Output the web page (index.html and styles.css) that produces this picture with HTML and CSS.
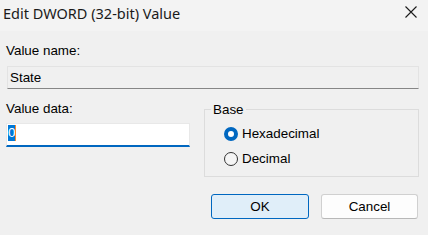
FILE: index.html
```html
<!DOCTYPE html>
<html lang="en">
<head>
    <meta charset="UTF-8">
    <title>Edit DWORD (32-bit) Value</title>
    <link rel="stylesheet" href="styles.css">
</head>
<body>

    <div class="dialog">
        <div class="titlebar">
            <span class="title">Edit DWORD (32-bit) Value</span>
            <svg class="close-icon" width="12" height="12" viewBox="0 0 12 12">
                <path d="M0.5 0.5 L11.5 11.5 M11.5 0.5 L0.5 11.5" stroke="#1a1a1a" stroke-width="1.1" fill="none"/>
            </svg>
        </div>

        <div class="content">
            <div class="field-label">Value name:</div>
            <div class="name-box">State</div>

            <div class="data-row">
                <div class="data-col">
                    <div class="field-label">Value data:</div>
                    <div class="data-box"><span class="selected">0</span><span class="caret"></span></div>
                </div>

                <fieldset class="base">
                    <legend>Base</legend>
                    <div class="radio-row">
                        <span class="radio checked"></span>
                        <span>Hexadecimal</span>
                    </div>
                    <div class="radio-row">
                        <span class="radio"></span>
                        <span>Decimal</span>
                    </div>
                </fieldset>
            </div>

            <div class="buttons">
                <button class="ok-button">OK</button>
                <button class="cancel-button">Cancel</button>
            </div>
        </div>
    </div>

</body>
</html>
```

FILE: styles.css
```css
body {
    margin: 0;
    padding: 0;
    background-color: #f0f0f0;
    font-family: "Liberation Sans", Arial, sans-serif;
    font-size: 13.4px;
    line-height: 15px;
    color: #000;
}

.dialog {
    width: 428px;
    height: 235px;
    overflow: hidden;
}

.titlebar {
    height: 31px;
    background-color: #f3f3f3;
    display: flex;
    align-items: flex-start;
    justify-content: space-between;
}

.title {
    font-family: "Noto Sans", sans-serif;
    font-size: 14.5px;
    line-height: 20px;
    padding: 3px 0 0 3px;
    color: #1a1a1a;
}

.close-icon {
    margin: 6px 11px 0 0;
}

.content {
    padding: 12px 9px 0 6px;
}

.name-box {
    margin: 8px 0 0 1px;
    height: 15px;
    padding: 3px 2px;
    border: 1px solid #e3e3e3;
    border-bottom-color: #868686;
    background-color: #f0f0f0;
}

.data-row {
    display: flex;
    justify-content: space-between;
    margin-top: 12px;
}

.data-col {
    width: 184px;
}

.data-col .field-label {
    margin-bottom: 7px;
}

.data-box {
    height: 21px;
    border: 1px solid #e8e8e8;
    border-bottom: 2px solid #0067c0;
    background-color: #fff;
    display: flex;
    align-items: flex-start;
    padding-left: 1px;
}

.selected {
    margin-top: 1px;
    width: 7px;
    height: 16px;
    line-height: 16px;
    background-color: #0078d7;
    color: #fff;
    text-align: center;
}

.caret {
    margin-top: 1px;
    width: 1px;
    height: 16px;
    background-color: #ff8a28;
}

.base {
    width: 215px;
    height: 75px;
    margin: 1px 0 0 0;
    padding: 0;
    border: 1px solid #dcdcdc;
    box-sizing: border-box;
    min-width: 0;
}

.base legend {
    margin-left: 6px;
    padding: 0 2px;
}

.radio-row {
    display: flex;
    align-items: center;
    height: 25px;
    margin-left: 19px;
}

.radio-row:first-of-type {
    margin-top: 4px;
}

.radio {
    width: 14px;
    height: 14px;
    box-sizing: border-box;
    border-radius: 50%;
    border: 1px solid #333;
    background-color: #f5f5f5;
    margin-right: 4px;
}

.radio.checked {
    border: 4px solid #0067c0;
    background-color: #fff;
}

.buttons {
    display: flex;
    justify-content: flex-end;
    gap: 12px;
    margin-top: 17px;
    padding-right: 1px;
}

.buttons button {
    height: 25px;
    font-family: "Liberation Sans", Arial, sans-serif;
    font-size: 13.4px;
    color: #000;
    border-radius: 3px;
    padding: 0;
}

.ok-button {
    width: 98px;
    background-color: #e0eef9;
    border: 1px solid #0067c0;
}

.cancel-button {
    width: 97px;
    background-color: #fdfdfd;
    border: 1px solid #d0d0d0;
    border-bottom-color: #b8b8b8;
}
```
